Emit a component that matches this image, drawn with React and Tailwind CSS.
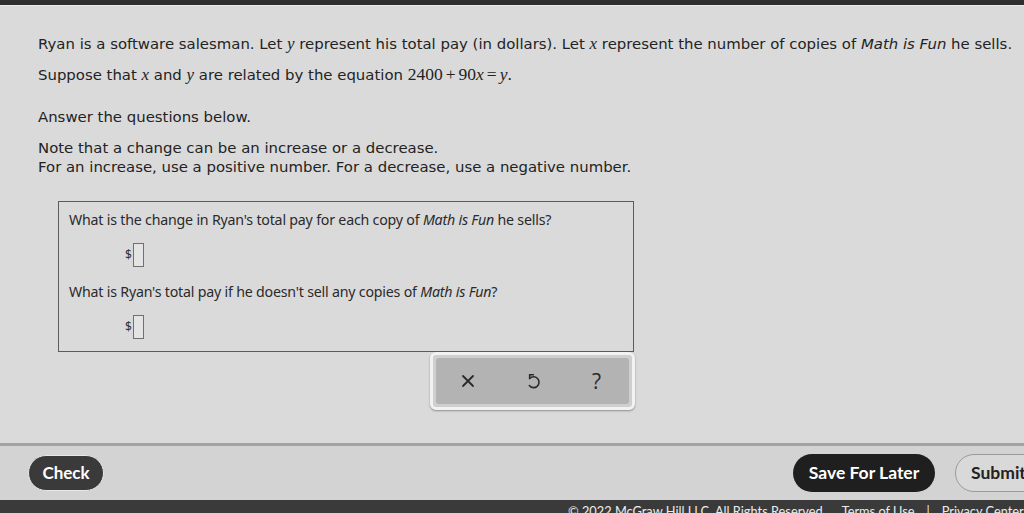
import React from "react";

const Var = ({ children }) => (
  <span className="italic text-[17px]" style={{ fontFamily: '"Liberation Serif", serif' }}>
    {children}
  </span>
);

const AnswerBox = () => (
  <div className="flex items-center ml-[56px] h-[26px]">
    <span className="text-[12px] text-[#333] mr-[1px]">$</span>
    <span className="w-[11px] h-[24px] border border-[#707070] bg-[#e4e4e4]" />
  </div>
);

// undo arrow: short bar with a hook, then a loop round to the right
const UndoIcon = () => (
  <svg width="20" height="20" viewBox="0 0 24 24" fill="none" stroke="#2a2a2a" strokeWidth="1.9" strokeLinecap="round" strokeLinejoin="round">
    <path d="M8 4.5 H12.5" />
    <path d="M8 4.5 V9" />
    <path d="M8 9 A6.5 6.5 0 1 1 7.6 17.5" />
  </svg>
);

const App = () => {
  return (
    <div
      className="w-full h-[513px] overflow-hidden flex flex-col bg-[#dadada] text-[#232323]"
      style={{ fontFamily: '"DejaVu Sans", Verdana, sans-serif' }}
    >
      <div className="h-[5px] bg-[#2f2f2f] shrink-0" />
      <div className="h-[1px] bg-[#ececec] shrink-0" />

      {/* problem statement */}
      <main className="flex-1 pl-[38px] pt-[23px] overflow-hidden">
        <div className="text-[14.9px] leading-[30px] whitespace-nowrap">
          <p>
            Ryan is a software salesman. Let <Var>y</Var> represent his total pay (in dollars). Let <Var>x</Var> represent the number of copies of <i>Math is Fun</i> he sells.
          </p>
          <p>
            Suppose that <Var>x</Var> and <Var>y</Var> are related by the equation{" "}
            <span className="text-[17.5px]" style={{ fontFamily: '"Liberation Serif", serif' }}>
              2400<span className="mx-[3px]">+</span>90<i>x</i><span className="mx-[3px]">=</span><i>y</i>.
            </span>
          </p>
        </div>

        <p className="text-[14.9px] leading-[20px] mt-[17px]">Answer the questions below.</p>

        <div className="text-[14.9px] leading-[19px] mt-[12px]">
          <p>Note that a change can be an increase or a decrease.</p>
          <p>For an increase, use a positive number. For a decrease, use a negative number.</p>
        </div>

        <section
          className="ml-[20px] mt-[24px] w-[576px] h-[151px] border border-[#5c5c5c] pl-[10px] pt-[10px] text-[#2a2a2a]"
          style={{ fontFamily: '"Noto Sans", Tahoma, sans-serif' }}
        >
          <p className="text-[14.2px] leading-[16px] tracking-[-0.2px]">
            What is the change in Ryan's total pay for each copy of <i>Math is Fun</i> he sells?
          </p>
          <div className="mt-[14px]">
            <AnswerBox />
          </div>
          <p className="text-[14.2px] leading-[16px] tracking-[-0.2px] mt-[16px]">
            What is Ryan's total pay if he doesn't sell any copies of <i>Math is Fun</i>?
          </p>
          <div className="mt-[14px]">
            <AnswerBox />
          </div>
        </section>

        {/* answer tools */}
        <div className="ml-[392px] w-[205px] h-[58px] rounded-[6px] border-[3px] border-[#f2f2f2] bg-[#cfcfcf] p-[3px] shadow-[0_1px_2px_rgba(0,0,0,0.35)]">
          <div className="h-full rounded-[3px] bg-[#b3b3b3] flex items-center justify-between pl-[25px] pr-[28px]">
            <svg width="14" height="14" viewBox="0 0 14 14" stroke="#2a2a2a" strokeWidth="1.8" strokeLinecap="round">
              <path d="M2 2 L12 12 M12 2 L2 12" />
            </svg>
            <UndoIcon />
            <span className="text-[21px] leading-none text-[#2a2a2a]" style={{ fontFamily: '"Open Sans", sans-serif' }}>?</span>
          </div>
        </div>
      </main>

      {/* action bar */}
      <div className="h-[3px] bg-[#a3a3a3] shrink-0" />
      <footer
        className="h-[54px] shrink-0 bg-[#d3d3d3] flex items-center pl-[28px]"
        style={{ fontFamily: 'Lato, "Open Sans", sans-serif' }}
      >
        <button className="w-[76px] h-[36px] rounded-full bg-[#3a3a3a] text-white font-bold text-[17px] border border-[#e8e8e8] shrink-0">
          Check
        </button>
        <div className="flex-1" />
        <button className="w-[142px] h-[38px] rounded-full bg-[#1f1f1f] text-white font-bold text-[17.5px] shrink-0">
          Save For Later
        </button>
        <button className="ml-[20px] mr-[-36px] w-[105px] h-[38px] rounded-full border border-[#9a9a9a] bg-[#d9d9d9] text-[#222] font-bold text-[17.5px] text-left pl-[15px] shrink-0">
          Submit
        </button>
      </footer>

      <div
        className="h-[13px] shrink-0 overflow-hidden bg-[#3a3a3a] text-[#ececec] text-[12.8px] leading-[18px] pt-[2px] flex whitespace-nowrap"
        style={{ fontFamily: 'Lato, sans-serif' }}
      >
        <span className="ml-[568px] shrink-0">© 2022 McGraw Hill LLC. All Rights Reserved.</span>
        <span className="ml-[16px] shrink-0">Terms of Use</span>
        <span className="mx-[12px] shrink-0">|</span>
        <span className="shrink-0">Privacy Center</span>
      </div>
    </div>
  );
};

export default App;
